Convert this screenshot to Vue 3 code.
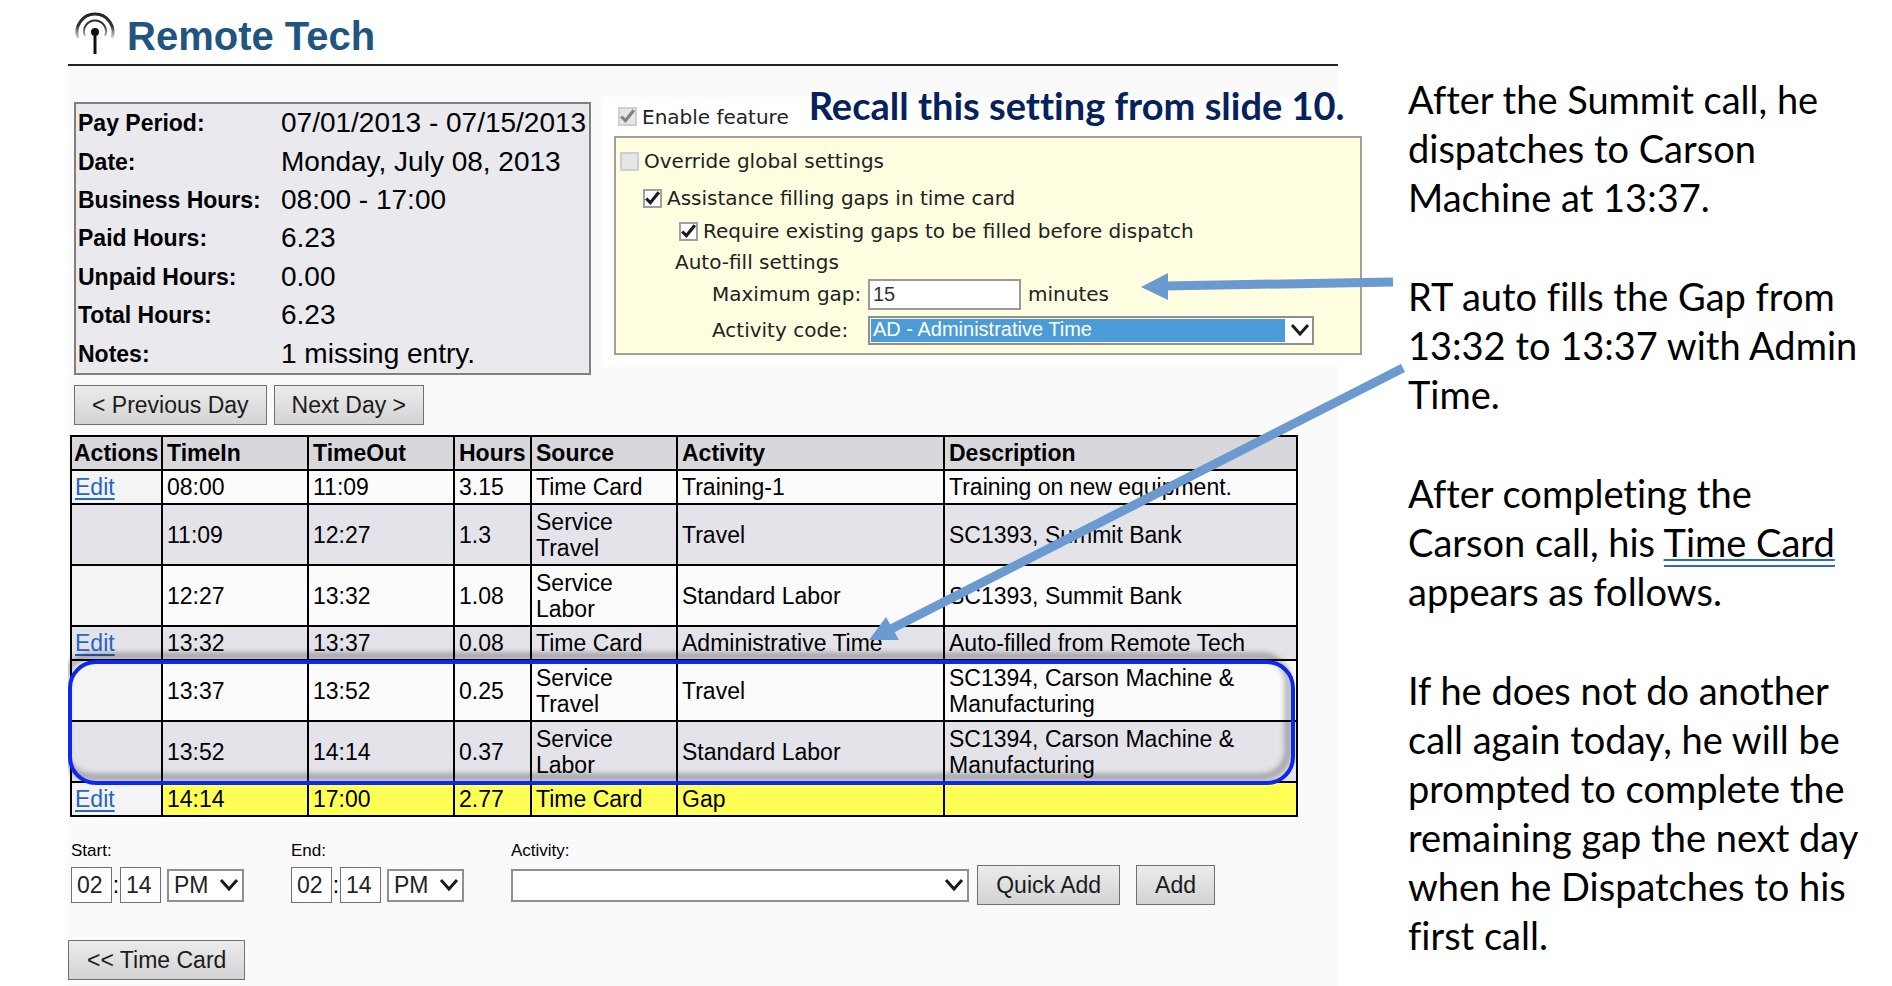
<script setup>
import { ref } from 'vue'

const summary = [
  ['Pay Period:', '07/01/2013 - 07/15/2013'],
  ['Date:', 'Monday, July 08, 2013'],
  ['Business Hours:', '08:00 - 17:00'],
  ['Paid Hours:', '6.23'],
  ['Unpaid Hours:', '0.00'],
  ['Total Hours:', '6.23'],
  ['Notes:', '1 missing entry.']
]

const columns = ['Actions', 'TimeIn', 'TimeOut', 'Hours', 'Source', 'Activity', 'Description']

const entries = [
  { edit: true, in: '08:00', out: '11:09', hours: '3.15', source: 'Time Card', activity: 'Training-1', text: 'Training on new equipment.' },
  { tall: true, in: '11:09', out: '12:27', hours: '1.3', source: 'Service Travel', activity: 'Travel', text: 'SC1393, Summit Bank' },
  { tall: true, in: '12:27', out: '13:32', hours: '1.08', source: 'Service Labor', activity: 'Standard Labor', text: 'SC1393, Summit Bank' },
  { edit: true, in: '13:32', out: '13:37', hours: '0.08', source: 'Time Card', activity: 'Administrative Time', text: 'Auto-filled from Remote Tech' },
  { tall: true, in: '13:37', out: '13:52', hours: '0.25', source: 'Service Travel', activity: 'Travel', text: 'SC1394, Carson Machine & Manufacturing' },
  { tall: true, in: '13:52', out: '14:14', hours: '0.37', source: 'Service Labor', activity: 'Standard Labor', text: 'SC1394, Carson Machine & Manufacturing' },
  { edit: true, gap: true, in: '14:14', out: '17:00', hours: '2.77', source: 'Time Card', activity: 'Gap', text: '' }
]

const times = [
  { id: 'start', label: 'Start:', hour: ref('02'), minute: ref('14') },
  { id: 'end', label: 'End:', hour: ref('02'), minute: ref('14') }
]

const enabled = ref(true)
const override = ref(false)
const assist = ref(true)
const requireFill = ref(true)
const maxGap = ref('15')
</script>

<template>
  <div class="page">
    <main class="app">
      <header class="title-bar">
        <svg class="logo" width="44" height="48" viewBox="0 0 44 48" aria-hidden="true">
          <defs>
            <linearGradient id="fade" gradientUnits="userSpaceOnUse" x1="0" y1="4" x2="0" y2="30">
              <stop offset="0" stop-color="#222" />
              <stop offset="0.5" stop-color="#333" />
              <stop offset="1" stop-color="#333" stop-opacity="0.1" />
            </linearGradient>
          </defs>
          <path d="M5 29 A18 18 0 1 1 39 29" fill="none" stroke="url(#fade)" stroke-width="3" />
          <path d="M12 27 A11 11 0 1 1 32 27" fill="none" stroke="url(#fade)" stroke-width="2" />
          <circle cx="22" cy="23" r="4" fill="#111" />
          <path d="M22 26 V45" stroke="#111" stroke-width="3" />
        </svg>
        <h1>Remote Tech</h1>
      </header>

      <section class="body">
        <div class="top">
          <dl class="summary">
            <template v-for="[name, value] in summary" :key="name">
              <dt>{{ name }}</dt>
              <dd>{{ value }}</dd>
            </template>
          </dl>

          <div class="settings">
            <div class="settings-head">
              <label class="check">
                <span class="box"><input v-model="enabled" type="checkbox" disabled /><svg v-if="enabled" viewBox="0 0 18 18"><path d="M3 9 L7 13 L15 3" /></svg></span>
                Enable feature
              </label>
              <strong class="recall">Recall this setting from slide 10.</strong>
            </div>
            <div class="options">
              <label class="check"><span class="box"><input v-model="override" type="checkbox" disabled /></span>Override global settings</label>
              <label class="check level-1"><span class="box"><input v-model="assist" type="checkbox" /><svg v-if="assist" viewBox="0 0 18 18"><path d="M3 9 L7 13 L15 3" /></svg></span>Assistance filling gaps in time card</label>
              <label class="check level-2"><span class="box"><input v-model="requireFill" type="checkbox" /><svg v-if="requireFill" viewBox="0 0 18 18"><path d="M3 9 L7 13 L15 3" /></svg></span>Require existing gaps to be filled before dispatch</label>
              <div class="auto">Auto-fill settings</div>
              <div class="field">
                <label for="max-gap">Maximum gap:</label>
                <input id="max-gap" v-model="maxGap" type="text" />
                <span>minutes</span>
              </div>
              <div class="field code">
                <label for="code">Activity code:</label>
                <span class="drop">
                  <select id="code"><option>AD - Administrative Time</option></select>
                  <svg viewBox="0 0 20 14"><path d="M2 2 L10 11 L18 2" /></svg>
                </span>
              </div>
            </div>
          </div>
        </div>

        <div class="days">
          <button type="button">&lt; Previous Day</button>
          <button type="button">Next Day &gt;</button>
        </div>

        <div class="card">
          <table>
            <colgroup>
              <col class="c-actions" /><col class="c-time" /><col class="c-time" /><col class="c-hours" />
              <col class="c-time" /><col class="c-activity" /><col />
            </colgroup>
            <thead>
              <tr><th v-for="c in columns" :key="c" scope="col">{{ c }}</th></tr>
            </thead>
            <tbody>
              <tr v-for="e in entries" :key="e.in" :class="{ tall: e.tall, gap: e.gap }">
                <td class="action"><a v-if="e.edit" href="#">Edit</a></td>
                <td>{{ e.in }}</td>
                <td>{{ e.out }}</td>
                <td>{{ e.hours }}</td>
                <td class="source">{{ e.source }}</td>
                <td>{{ e.activity }}</td>
                <td>{{ e.text }}</td>
              </tr>
            </tbody>
          </table>
          <div class="ring"></div>
        </div>

        <form class="entry" @submit.prevent>
          <div v-for="t in times" :key="t.id" class="time">
            <label :for="t.id">{{ t.label }}</label>
            <div class="controls">
              <input :id="t.id" v-model="t.hour.value" type="text" />
              <span class="colon">:</span>
              <input v-model="t.minute.value" type="text" :aria-label="t.id + ' minute'" />
              <span class="drop">
                <select :aria-label="t.id + ' half of day'"><option>PM</option></select>
                <svg viewBox="0 0 20 14"><path d="M2 2 L10 11 L18 2" /></svg>
              </span>
            </div>
          </div>
          <div class="activity">
            <label for="activity">Activity:</label>
            <div class="controls">
              <span class="drop wide">
                <select id="activity"><option></option></select>
                <svg viewBox="0 0 20 14"><path d="M2 2 L10 11 L18 2" /></svg>
              </span>
              <button type="button">Quick Add</button>
              <button type="submit" class="add">Add</button>
            </div>
          </div>
        </form>

        <button type="button" class="back">&lt;&lt; Time Card</button>
      </section>
    </main>

    <aside class="notes">
      <p>After the Summit call, he<br />dispatches to Carson<br />Machine at 13:37.</p>
      <p>RT auto fills the Gap from<br />13:32 to 13:37 with Admin<br />Time.</p>
      <p>After completing the<br />Carson call, his <span class="marked">Time Card</span><br />appears as follows.</p>
      <p>If he does not do another<br />call again today, he will be<br />prompted to complete the<br />remaining gap the next day<br />when he Dispatches to his<br />first call.</p>
    </aside>

    <svg class="arrows" width="1410" height="660" viewBox="0 0 1410 660" aria-hidden="true">
      <path d="M1393 282 L1165 286" />
      <path class="head" d="M1141 287 L1168 273 V300 Z" />
      <path d="M1403 368 L889 630" />
      <path class="head" d="M869 640 L886 617 L899 640 Z" />
    </svg>
  </div>
</template>

<style>
body {
  margin: 0;
  background: #fff;
}
</style>

<style scoped>
.page {
  position: relative;
  display: grid;
  grid-template-columns: 1270fr 484fr;
  column-gap: 70px;
  padding-left: 68px;
  min-height: 100vh;
  box-sizing: border-box;
  overflow: hidden;
  color: #000;
  font: 23px/26px "Liberation Sans", Arial, sans-serif;
}

.app {
  display: flex;
  flex-direction: column;
  min-width: 0;
}

.title-bar {
  display: flex;
  align-items: center;
  gap: 10px;
  height: 64px;
  padding-left: 5px;
  border-bottom: 2px solid #222;
}

.logo {
  margin-top: 2px;
}

h1 {
  margin: 8px 0 0;
  color: #1f5580;
  font-size: 40px;
  line-height: 44px;
}

.body {
  flex: 1;
  background: #fafafa;
}

.top {
  display: flex;
  align-items: flex-start;
  gap: 12px;
  margin-right: -24px;
  padding: 31px 0 0 6px;
}

.summary {
  display: grid;
  grid-template-columns: 203px auto;
  grid-auto-rows: 1fr;
  align-items: center;
  flex: none;
  box-sizing: border-box;
  width: 517px;
  height: 273px;
  margin: 5px 0 0;
  padding: 0 2px;
  border: 2px solid #808080;
  background: #eae9ee;
}

dt {
  font-weight: bold;
}

dd {
  margin: 0;
  font-size: 28px;
  line-height: 30px;
  white-space: nowrap;
}

.settings {
  flex: 1;
  min-width: 0;
  padding: 0 0 12px 11px;
  background: #fff;
  color: #222;
  font: 20px/24px "DejaVu Sans", Verdana, sans-serif;
}

.settings-head {
  display: flex;
  align-items: center;
  height: 39px;
  padding-left: 4px;
}

.recall {
  margin: -24px 0 0 20px;
  color: #05225c;
  font: bold 38px/44px Lato, sans-serif;
  font-variant-ligatures: none;
  white-space: nowrap;
}

.check {
  display: flex;
  align-items: center;
  gap: 5px;
  white-space: nowrap;
}

.box {
  position: relative;
  display: block;
  width: 19px;
  height: 19px;
}

.box input {
  display: block;
  appearance: none;
  box-sizing: border-box;
  width: 19px;
  height: 19px;
  margin: 0;
  border: 2px solid #a0a0a0;
  background: #fff;
}

.box input:disabled {
  border-color: #cfcfcf;
  background: #e6e6e6;
}

.box svg {
  position: absolute;
  inset: 0;
  fill: none;
  stroke: #1b1b1b;
  stroke-width: 3;
  pointer-events: none;
}

.box input:disabled + svg {
  stroke: #808080;
}

.options {
  box-sizing: border-box;
  height: 219px;
  padding: 11px 0 0 4px;
  border: 2px solid #a3a395;
  background: #fffee1;
}

.level-1 {
  margin: 13px 0 0 23px;
}

.level-2 {
  margin: 9px 0 0 59px;
}

.auto {
  margin: 7px 0 0 55px;
}

.field {
  display: flex;
  align-items: center;
  height: 32px;
  margin: 4px 0 0 92px;
}

.field label {
  width: 156px;
  white-space: nowrap;
}

.field input {
  box-sizing: border-box;
  width: 153px;
  height: 31px;
  margin-right: 7px;
  padding: 0 3px;
  border: 2px solid #9a9a9a;
  background: #fff;
  color: #333;
  font: 20px/22px "Liberation Sans", Arial, sans-serif;
}

.code .drop {
  width: 446px;
  height: 29px;
}

.code select {
  padding: 0 3px 3px;
  border: 2px solid #333;
  background: linear-gradient(#4a9bd6, #4a9bd6) 1px 1px / calc(100% - 28px) calc(100% - 2px) no-repeat #fff;
  color: #fff;
  font: 20px/22px "Liberation Sans", Arial, sans-serif;
}

.code .drop svg {
  right: 4px;
}

.drop {
  position: relative;
  display: block;
  width: 77px;
  height: 33px;
}

.drop select {
  appearance: none;
  box-sizing: border-box;
  width: 100%;
  height: 100%;
  border: 2px solid #909090;
  border-radius: 0;
}

.drop svg {
  position: absolute;
  top: 50%;
  right: 5px;
  width: 20px;
  height: 14px;
  margin-top: -7px;
  fill: none;
  stroke: #1b1b1b;
  stroke-width: 3;
  pointer-events: none;
}

button {
  box-sizing: border-box;
  height: 40px;
  padding: 0 18px;
  border: 1px solid #707070;
  border-radius: 0;
  background: linear-gradient(#ececec, #d3d3d3);
  color: #1b1b1b;
  font: inherit;
  white-space: nowrap;
}

.days {
  display: flex;
  gap: 7px;
  padding: 10px 0 10px 6px;
}

.days button {
  padding: 0 17px;
}

.card {
  position: relative;
  margin: 0 40px 0 2px;
}

table {
  width: 100%;
  border-collapse: collapse;
  table-layout: fixed;
}

.c-actions { width: 91px; }
.c-time { width: 146px; }
.c-hours { width: 77px; }
.c-activity { width: 267px; }

tr {
  height: 34px;
}

.tall {
  height: 61px;
}

th,
td {
  padding: 0 3px 0 4px;
  border: 2px solid #000;
  text-align: left;
  vertical-align: middle;
}

th {
  padding: 0 0 0 4px;
  background: #d8d7dc;
}

th:first-child {
  padding: 0 2px;
}

tbody tr {
  background: #fbfbfb;
}

tbody tr:nth-child(even) {
  background: #e4e3e9;
}

tbody tr:nth-child(odd) .action {
  background: #f4f4f4;
}

tbody .gap {
  background: #ffff55;
}

.action {
  padding: 0 3px;
}

.source {
  padding-right: 30px;
}

.tall .source {
  padding-right: 50px;
}

a {
  color: #2566c8;
  text-underline-offset: 3px;
}

.ring {
  position: absolute;
  right: 3px;
  bottom: 32px;
  left: -2px;
  box-sizing: border-box;
  height: 125px;
  border: 4px solid #0a28f0;
  border-radius: 28px;
  filter: drop-shadow(-5px -6px 3px rgba(0, 0, 0, 0.5));
  clip-path: inset(-16px 0 0 0);
  pointer-events: none;
}

.entry {
  display: flex;
  padding: 24px 123px 0 3px;
}

.entry label {
  display: block;
  height: 24px;
  font-size: 17px;
  line-height: 20px;
}

.controls {
  display: flex;
  align-items: center;
  height: 40px;
}

.time {
  width: 220px;
}

.time input {
  box-sizing: border-box;
  width: 41px;
  height: 36px;
  padding: 0 5px;
  border: 1px solid #707070;
  background: #fff;
  color: #222;
  font: inherit;
}

.colon {
  width: 8px;
  text-align: center;
}

.time .drop {
  margin-left: 6px;
}

.entry select {
  padding: 0 5px;
  background: #fff;
  color: #222;
  font: inherit;
}

.activity {
  flex: 1;
}

.wide {
  flex: 1;
  margin-right: 8px;
}

.add {
  margin-left: 16px;
}

.back {
  display: block;
  margin-top: 35px;
}

.notes {
  padding-top: 75px;
  font: 38px/49px Lato, sans-serif;
  font-variant-ligatures: none;
  white-space: nowrap;
}

.notes p {
  margin: 0 0 50px;
}

.marked {
  border-bottom: 2px solid #2f66d8;
  text-decoration: underline #2f66d8 2px;
  text-underline-offset: 2px;
  text-decoration-skip-ink: none;
}

.arrows {
  position: absolute;
  top: 0;
  left: 0;
  fill: none;
  stroke: #6a9ad0;
  stroke-width: 9;
  pointer-events: none;
}

.head {
  fill: #6a9ad0;
  stroke: none;
}
</style>
